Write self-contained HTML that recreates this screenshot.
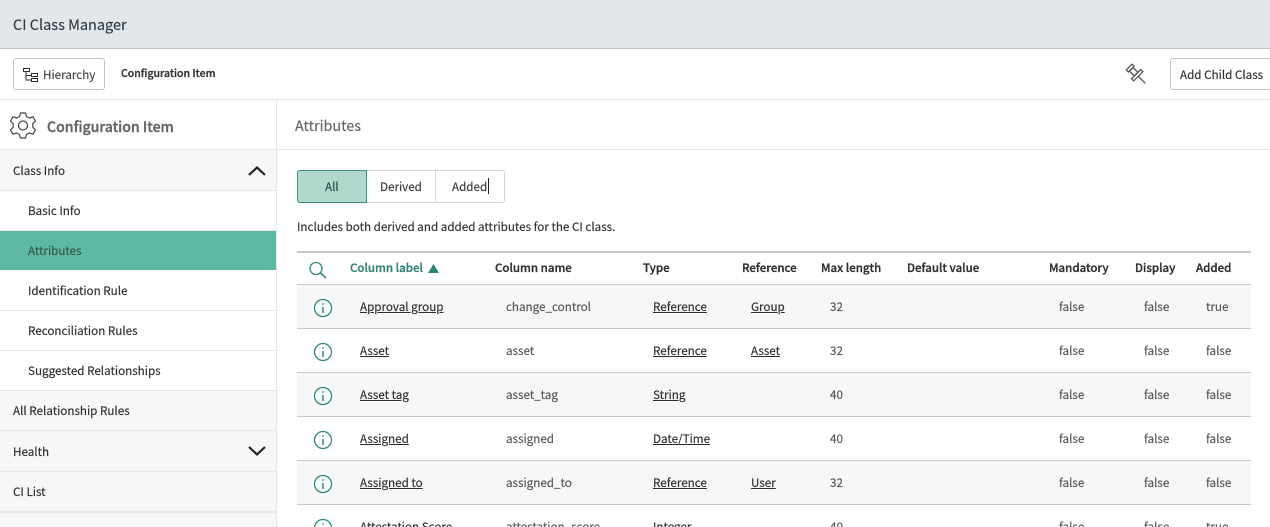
<!DOCTYPE html>
<html><head><meta charset="utf-8"><style>
html,body{margin:0;padding:0;background:#fff}
#p{position:relative;width:1270px;height:527px;overflow:hidden;font-family:"Noto Sans CJK SC","Liberation Sans",sans-serif;font-size:11.65px;color:#2e2e2e;background:#fff}
#p div,#p a,#p svg{position:absolute}
.t{white-space:nowrap;line-height:18px;height:18px;margin-top:1px;-webkit-text-stroke:.15px currentColor}
.n{left:0;width:276px;border-bottom:1px solid #e4e6e7}
.g{background:#f7f7f7}
#p .h{font-weight:500;top:259px;color:#2e2e2e;font-size:11.5px;margin-top:0;-webkit-text-stroke:.3px currentColor}
.r{left:297px;width:954px;height:43px;border-bottom:1px solid #c8c8c8}
.u{text-decoration:underline;color:#2e2e2e}
.v{color:#555}
</style></head><body><div id="p">

<div style="left:0;top:0;width:1270px;height:48px;background:#e4e7ea;border-bottom:1px solid #c4c6c8"></div>
<div class="t" style="left:13px;top:15px;font-size:14.5px;color:#2e3d49">CI Class Manager</div>

<div style="left:0;top:99px;width:1270px;height:1px;background:#e4e6e7"></div>
<div style="left:13px;top:58px;width:90px;height:30px;border:1px solid #bfc3c5;border-radius:3px;background:#fff"></div>
<svg style="left:22px;top:67px" width="17" height="16" viewBox="0 0 17 16" fill="none" stroke="#2e2e2e" stroke-width="1"><rect x="1.500" y="1.500" width="6" height="3"/><path d="M4 4.500V13H9M4 8.500H9"/><rect x="9.500" y="6.500" width="6" height="3"/><rect x="9.500" y="11.500" width="6" height="3"/></svg>
<div class="t" style="left:43px;top:65px;color:#444">Hierarchy</div>
<div class="t" style="left:121px;top:64px;font-size:10.500px;font-weight:500;color:#333;-webkit-text-stroke:.3px #333">Configuration Item</div>
<svg style="left:1120px;top:62px" width="30" height="26" viewBox="0 0 30 26" fill="none" stroke="#555" stroke-width="1.300"><g transform="translate(10.500 6.500) rotate(-45)"><rect x="-4" y="-2" width="8" height="3"/><rect x="-2.500" y="1" width="5" height="7"/><rect x="-6.500" y="8" width="13" height="3"/><path d="M0 11V21"/></g></svg>
<div style="left:1170px;top:58px;width:110px;height:30px;border:1px solid #bfc3c5;border-radius:3px;background:#fff"></div>
<div class="t" style="left:1180px;top:65px;color:#2e2e2e">Add Child Class</div>

<div style="left:276px;top:100px;width:1px;height:427px;background:#e4e6e7"></div>
<svg style="left:9px;top:111px" width="29" height="29" viewBox="0 0 29 29" fill="none" stroke="#444" stroke-width="1.200" stroke-linejoin="round"><circle cx="14" cy="14.500" r="4.500"/><path d="M11.500 2H16.500L17.500 5.500 20.500 7 24 5.800 26.500 10 23.800 12.700V16.300L26.500 19 24 23.200 20.500 22 17.500 23.500 16.500 27H11.500L10.500 23.500 7.500 22 4 23.200 1.500 19 4.200 16.300V12.700L1.500 10 4 5.800 7.500 7 10.500 5.500Z"/></svg>
<div class="t" style="left:47px;top:117px;font-size:14.100px;font-weight:500;color:#666;-webkit-text-stroke:.4px #666">Configuration Item</div>
<div class="t" style="left:295px;top:116px;font-size:14.350px;color:#666">Attributes</div>
<div style="left:0;top:149px;width:1270px;height:1px;background:#e4e6e7"></div>

<div class="n g" style="top:150px;height:40px"></div>
<div class="t" style="left:13px;top:161px">Class Info</div>
<svg style="left:248px;top:165px" width="18" height="12" viewBox="0 0 18 12" fill="none" stroke="#222" stroke-width="2.200"><path d="M1 10 9 2.500 17 10"/></svg>
<div class="n" style="top:191px;height:39px"></div>
<div class="t" style="left:28px;top:201px">Basic Info</div>
<div style="left:0;top:231px;width:276px;height:39px;background:#5fb8a1"></div>
<div class="t" style="left:28px;top:241px;color:#33564e">Attributes</div>
<div class="n" style="top:271px;height:39px"></div>
<div class="t" style="left:28px;top:281px">Identification Rule</div>
<div class="n" style="top:311px;height:39px"></div>
<div class="t" style="left:28px;top:321px">Reconciliation Rules</div>
<div class="n" style="top:351px;height:39px"></div>
<div class="t" style="left:28px;top:361px">Suggested Relationships</div>
<div class="n g" style="top:391px;height:39px"></div>
<div class="t" style="left:13px;top:401px">All Relationship Rules</div>
<div class="n g" style="top:431px;height:40px"></div>
<div class="t" style="left:13px;top:442px">Health</div>
<svg style="left:248px;top:445px" width="18" height="12" viewBox="0 0 18 12" fill="none" stroke="#222" stroke-width="2.200"><path d="M1 2 9 9.500 17 2"/></svg>
<div class="n g" style="top:472px;height:39px"></div>
<div class="t" style="left:13px;top:482px">CI List</div>
<div class="g" style="left:0;top:512px;width:276px;height:15px;border-top:1px solid #e8e8e8"></div>

<div style="left:297px;top:170px;width:206px;height:31px;border:1px solid #d4d6d7;border-radius:3px"></div>
<div style="left:297px;top:170px;width:68px;height:31px;border:1px solid #3f8f80;border-radius:3px 0 0 3px;background:#b0d9ce"></div>
<div style="left:435px;top:171px;width:1px;height:31px;background:#d4d6d7"></div>
<div class="t" style="left:325px;top:177px;color:#2e4a44">All</div>
<div class="t" style="left:380px;top:177px;color:#3a3a3a">Derived</div>
<div class="t" style="left:452px;top:177px;color:#3a3a3a">Added</div>
<div style="left:488px;top:178px;width:1px;height:16px;background:#222"></div>
<div class="t" style="left:297px;top:217px;color:#333">Includes both derived and added attributes for the CI class.</div>

<div style="left:297px;top:251px;width:954px;height:2px;background:#c8c8c8"></div>
<div style="left:297px;top:284px;width:954px;height:1px;background:#c8c8c8"></div>
<svg style="left:308px;top:261px" width="20" height="18" viewBox="0 0 20 18" fill="none" stroke="#2f8a80" stroke-width="1.300"><circle cx="8" cy="7.500" r="6"/><path d="M12.500 12 18 17" stroke-width="1.600"/></svg>
<div class="t h" style="left:350px;color:#2f8276">Column label</div>
<svg style="left:428px;top:264px" width="11" height="9" viewBox="0 0 11 9"><path d="M5.500 0 11 9H0Z" fill="#2f8276"/></svg>
<div class="t h" style="left:495px">Column name</div>
<div class="t h" style="left:643px">Type</div>
<div class="t h" style="left:742px">Reference</div>
<div class="t h" style="left:821px">Max length</div>
<div class="t h" style="left:907px">Default value</div>
<div class="t h" style="left:1049px">Mandatory</div>
<div class="t h" style="left:1135px">Display</div>
<div class="t h" style="left:1196px">Added</div>

<div class="r g" style="top:285px"></div>
<div class="r" style="top:329px"></div>
<div class="r g" style="top:373px"></div>
<div class="r" style="top:417px"></div>
<div class="r g" style="top:461px"></div>
<div class="r" style="top:505px;border:0;height:22px"></div>

<svg style="left:313px;top:298px" width="20" height="20" viewBox="0 0 20 20" fill="none" stroke="#2f8a80" stroke-width="1.300"><circle cx="10" cy="10" r="8.500"/><path d="M10 9V15M10 5.200V6.800" stroke-width="1.500"/></svg>
<div class="t u" style="left:360px;top:297px">Approval group</div>
<div class="t v" style="left:506px;top:297px">change_control</div>
<div class="t u" style="left:653px;top:297px">Reference</div>
<div class="t u" style="left:751px;top:297px">Group</div>
<div class="t v" style="left:830px;top:297px">32</div>
<div class="t v" style="left:1059px;top:297px">false</div>
<div class="t v" style="left:1144px;top:297px">false</div>
<div class="t v" style="left:1206px;top:297px">true</div>

<svg style="left:313px;top:342px" width="20" height="20" viewBox="0 0 20 20" fill="none" stroke="#2f8a80" stroke-width="1.300"><circle cx="10" cy="10" r="8.500"/><path d="M10 9V15M10 5.200V6.800" stroke-width="1.500"/></svg>
<div class="t u" style="left:360px;top:341px">Asset</div>
<div class="t v" style="left:506px;top:341px">asset</div>
<div class="t u" style="left:653px;top:341px">Reference</div>
<div class="t u" style="left:751px;top:341px">Asset</div>
<div class="t v" style="left:830px;top:341px">32</div>
<div class="t v" style="left:1059px;top:341px">false</div>
<div class="t v" style="left:1144px;top:341px">false</div>
<div class="t v" style="left:1206px;top:341px">false</div>

<svg style="left:313px;top:386px" width="20" height="20" viewBox="0 0 20 20" fill="none" stroke="#2f8a80" stroke-width="1.300"><circle cx="10" cy="10" r="8.500"/><path d="M10 9V15M10 5.200V6.800" stroke-width="1.500"/></svg>
<div class="t u" style="left:360px;top:385px">Asset tag</div>
<div class="t v" style="left:506px;top:385px">asset_tag</div>
<div class="t u" style="left:653px;top:385px">String</div>
<div class="t v" style="left:830px;top:385px">40</div>
<div class="t v" style="left:1059px;top:385px">false</div>
<div class="t v" style="left:1144px;top:385px">false</div>
<div class="t v" style="left:1206px;top:385px">false</div>

<svg style="left:313px;top:430px" width="20" height="20" viewBox="0 0 20 20" fill="none" stroke="#2f8a80" stroke-width="1.300"><circle cx="10" cy="10" r="8.500"/><path d="M10 9V15M10 5.200V6.800" stroke-width="1.500"/></svg>
<div class="t u" style="left:360px;top:429px">Assigned</div>
<div class="t v" style="left:506px;top:429px">assigned</div>
<div class="t u" style="left:653px;top:429px">Date/Time</div>
<div class="t v" style="left:830px;top:429px">40</div>
<div class="t v" style="left:1059px;top:429px">false</div>
<div class="t v" style="left:1144px;top:429px">false</div>
<div class="t v" style="left:1206px;top:429px">false</div>

<svg style="left:313px;top:474px" width="20" height="20" viewBox="0 0 20 20" fill="none" stroke="#2f8a80" stroke-width="1.300"><circle cx="10" cy="10" r="8.500"/><path d="M10 9V15M10 5.200V6.800" stroke-width="1.500"/></svg>
<div class="t u" style="left:360px;top:473px">Assigned to</div>
<div class="t v" style="left:506px;top:473px">assigned_to</div>
<div class="t u" style="left:653px;top:473px">Reference</div>
<div class="t u" style="left:751px;top:473px">User</div>
<div class="t v" style="left:830px;top:473px">32</div>
<div class="t v" style="left:1059px;top:473px">false</div>
<div class="t v" style="left:1144px;top:473px">false</div>
<div class="t v" style="left:1206px;top:473px">false</div>

<svg style="left:313px;top:518px" width="20" height="20" viewBox="0 0 20 20" fill="none" stroke="#2f8a80" stroke-width="1.300"><circle cx="10" cy="10" r="8.500"/><path d="M10 9V15M10 5.200V6.800" stroke-width="1.500"/></svg>
<div class="t u" style="left:360px;top:517px">Attestation Score</div>
<div class="t v" style="left:506px;top:517px">attestation_score</div>
<div class="t u" style="left:653px;top:517px">Integer</div>
<div class="t v" style="left:830px;top:517px">40</div>
<div class="t v" style="left:1059px;top:517px">false</div>
<div class="t v" style="left:1144px;top:517px">false</div>
<div class="t v" style="left:1206px;top:517px">true</div>

</div></body></html>
